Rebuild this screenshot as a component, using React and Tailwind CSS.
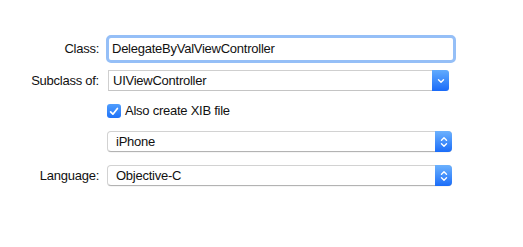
export default function App() {
  const font = { fontFamily: '"Liberation Sans", Arial, sans-serif' };

  const UpDown = () => (
    <svg width="8" height="12" viewBox="0 0 8 12" fill="none" stroke="white" strokeWidth="1.4" strokeLinecap="round" strokeLinejoin="round">
      <path d="M1.5 4.2 L4 1.8 L6.5 4.2" />
      <path d="M1.5 7.8 L4 10.2 L6.5 7.8" />
    </svg>
  );

  const Down = () => (
    <svg width="8" height="6" viewBox="0 0 8 6" fill="none" stroke="white" strokeWidth="1.4" strokeLinecap="round" strokeLinejoin="round">
      <path d="M1.5 1.8 L4 4.2 L6.5 1.8" />
    </svg>
  );

  const Popup = ({ value }) => (
    <div className="ml-[8px] flex h-[21px] w-[345px] rounded-[4px] border border-[#d2d2d2] border-b-[#b3b3b3] bg-white shadow-[0_0.5px_0.5px_rgba(0,0,0,0.08)]">
      <div className="flex flex-1 items-center pl-[8px] text-[13px] tracking-[-0.25px] text-[#111]">{value}</div>
      <div className="-my-px -mr-px flex w-[17px] items-center justify-center rounded-r-[4px] bg-gradient-to-b from-[#6cb1fd] to-[#1a6cf8]">
        <UpDown />
      </div>
    </div>
  );

  return (
    <div className="h-[247px] w-[523px] bg-white pt-[35px] text-[13px] tracking-[-0.25px] text-[#111]" style={font}>
      <div className="flex h-[28px] items-center">
        <div className="w-[99px] text-right">Class:</div>
        <div className="ml-[7px] flex h-[28px] w-[350px] items-center rounded-[5px] border-[3px] border-[#95bff7] bg-white pl-[3px]">
          DelegateByValViewController
        </div>
      </div>

      <div className="mt-[7px] flex h-[21px] items-center">
        <div className="w-[99px] text-right">Subclass of:</div>
        <div className="ml-[9px] flex h-[21px] w-[341px]">
          <div className="flex flex-1 items-center border border-r-0 border-[#cfcfcf] border-b-[#c4c4c4] pl-[4px]">UIViewController</div>
          <div className="flex w-[17px] items-center justify-center rounded-r-[3px] bg-gradient-to-b from-[#62abfd] to-[#1a6af8]">
            <Down />
          </div>
        </div>
      </div>

      <div className="mt-[13px] flex h-[14px] items-center">
        <div className="w-[99px]" />
        <div className="ml-[8px] flex h-[14px] w-[14px] items-center justify-center rounded-[3px] bg-gradient-to-b from-[#4f9dfd] to-[#1f72f8]">
          <svg width="10" height="9" viewBox="0 0 10 9" fill="none" stroke="white" strokeWidth="1.7" strokeLinecap="round" strokeLinejoin="round">
            <path d="M1.6 4.8 L3.9 7.2 L8.4 1.4" />
          </svg>
        </div>
        <div className="ml-[4px]">Also create XIB file</div>
      </div>

      <div className="mt-[13px] flex items-center">
        <div className="w-[99px]" />
        <Popup value="iPhone" />
      </div>

      <div className="mt-[13px] flex items-center">
        <div className="w-[99px] text-right">Language:</div>
        <Popup value="Objective-C" />
      </div>
    </div>
  );
}
